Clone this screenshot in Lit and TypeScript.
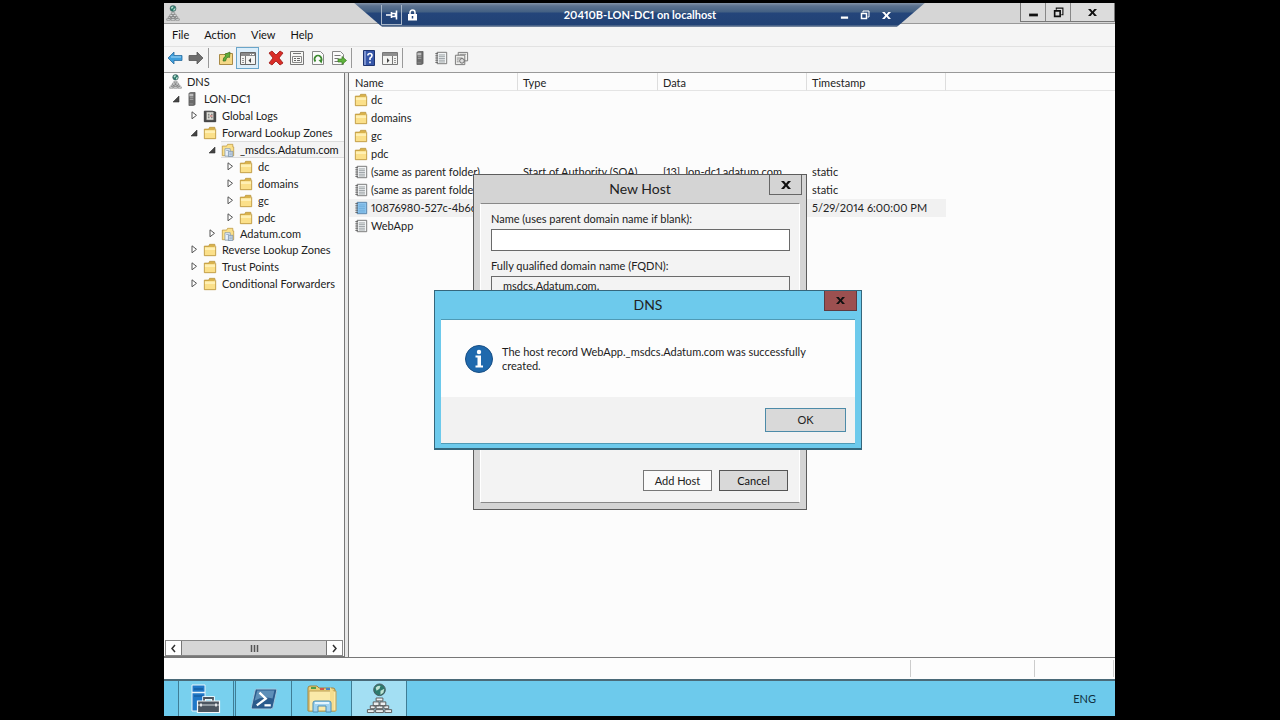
import { LitElement, html, css, svg, nothing, TemplateResult } from "lit";
import { customElement, state } from "lit/decorators.js";
import { classMap } from "lit/directives/class-map.js";

const icon = (body: unknown, w = 16, h = w, vb = `0 0 ${w} ${h}`) =>
  html`<svg width=${w} height=${h} viewBox=${vb} aria-hidden="true">${body}</svg>`;

const folder = () => icon(svg`
  <path d="M1.500 3.500h5l1-2h6v3h1v10h-13z" fill="#d9b24c"/>
  <path d="M2 5h12v9H2z" fill="#fbe08a"/>
  <path d="M2 5h12v3H2z" fill="#fff0b4"/>
  <path d="M1.500 14.500h13v-11h-1v-2h-6l-1 2h-5z" fill="none" stroke="#b8923a" stroke-width=".8"/>`, 14, 14, "0 0 16 16");

const zone = () => icon(svg`
  <path d="M1.500 3.500h5l1-2h6v3h1v10h-13z" fill="#fbe08a" stroke="#b8923a" stroke-width=".8"/>
  <path d="M4.500 6.500h6v8.500h-6z" fill="#eaf2fa" stroke="#7890aa" stroke-width=".8"/>
  <path d="M8.500 9.500h5v6h-5z" fill="#d4e4f4" stroke="#6f87a2" stroke-width=".8"/>
  <path d="M9.500 11.500h3M9.500 13.500h3M6 8.500h3" stroke="#7890aa" stroke-width=".8"/>`, 14, 14, "0 0 16 16");

const logs = () => icon(svg`
  <path d="M1.500 2.500h9l4 1v11h-13z" fill="#4a4a4a" stroke="#333"/>
  <path d="M4 3.500h8v9H4z" fill="#e8e8e0" stroke="#777" stroke-width=".6"/>
  <path d="M5.500 6h2M5.500 8h2M5.500 10h2M9 6h2M9 10h2" stroke="#555"/>
  <path d="M8 8h3" stroke="#a33"/>`, 14, 14, "0 0 16 16");

const server = () => icon(svg`
  <path d="M4.500 1.500l2-1h5v14l-2 1h-5z" fill="#6c6c6c" stroke="#555" stroke-width=".8"/>
  <path d="M5 2h4.500v3H5z" fill="#bdbdbd"/><path d="M5.500 6.500h4M5.500 8.500h4" stroke="#a8a8a8"/>
  <path d="M5 13.500h4" stroke="#8d8d8d"/>`, 14, 14, "0 0 16 16");

const record = (sel = false) => icon(svg`
  <path d="M3.500 1.500h11v13h-11z" fill=${sel ? "#8cc4ee" : "#f2f4f5"} stroke=${sel ? "#4f7da3" : "#6d6d6d"}/>
  <path d="M5.500 4.500h7M5.500 6.500h7M5.500 8.500h7M5.500 10.500h7M5.500 12.500h7" stroke=${sel ? "#6aa9d8" : "#858c90"} stroke-width=".9"/>
  <path d="M1.500 3h3M1.500 5.500h3M1.500 8h3M1.500 10.500h3M1.500 13h3" stroke="#555"/>`, 14, 14, "0 0 16 16");

const dns = (size: number) => icon(svg`
  <circle cx="16" cy="7" r="6" fill="#2d7a6d" stroke="#47585c"/>
  <path d="M12 5q2-3 5-2l-1 3-3 2zM17 8l4-2-1 4-3 2z" fill="#bfe3d4"/>
  <g fill="#eceff0" stroke="#5a5a5a">
    <path d="M12.500 15.500h7v3h-7zM9.500 19.500h6v4h-6zM16.500 19.500h6v4h-6zM6.500 23.500h5v3h-5zM12.500 23.500h7v3h-7zM20.500 23.500h5v3h-5zM3.500 27.500h7v3h-7zM12 27.500h8v3h-8zM21.500 27.500h7v3h-7z"/>
  </g>`, size, size, "0 0 32 32");

const windowIcon = () => icon(svg`
  <path d="M.5 2.500h15v12H.5z" fill="#f4f4f2" stroke="#666"/>
  <path d="M1 3h14v3H1z" fill="#8a8a8a"/><path d="M10 4.500h1M12 4.500h2" stroke="#fff"/>
  <path d="M5.500 6v8" stroke="#777"/><path d="M2 8.500h2M2 10.500h2M2 12.500h2" stroke="#999"/>
  <path d="M11 8v5L8.500 10.500z" fill="#444"/>`);

const tools: Record<string, () => TemplateResult> = {
  Back: () => icon(svg`<path d="M1 8l6-6v3.500h8v5H7V14z" fill="#3f9fdc" stroke="#2a6c9e" stroke-width=".8"/><path d="M4 7h10" stroke="#a6d8f5"/>`),
  Forward: () => icon(svg`<path d="M15 8L9 2v3.500H1v5h8V14z" fill="#6e6e6e" stroke="#555" stroke-width=".8"/>`),
  "Up one level": () => icon(svg`<path d="M1.500 4.500h5l1-1h7v11h-13z" fill="#f4d887" stroke="#a98a45"/><path d="M5 11q0-4 3-5L6.500 4.500 12 2l-.5 5.500L10 7q-2 1-2.500 4z" fill="#5fae3a" stroke="#38701f" stroke-width=".7"/>`),
  "Console tree": windowIcon,
  Delete: () => icon(svg`<path d="M1 3l3-2 4 4 4-4 3 2-4 5 4 5-3 2-4-4-4 4-3-2 4-5z" fill="#d92d27" stroke="#9c1713" stroke-width=".8"/>`),
  Properties: () => icon(svg`<path d="M1.500 1.500h13v13h-13z" fill="#f7f7f5" stroke="#777"/><path d="M4 3.500h8" stroke="#777"/><path d="M3.500 6.500h9v6h-9z" fill="none" stroke="#888"/><path d="M5 8.500h2M8 8.500h3M5 10.500h2M8 10.500h3" stroke="#666"/>`),
  Refresh: () => icon(svg`<path d="M2.500 1.500h8l3 3v10h-11z" fill="#fafafa" stroke="#888"/><path d="M5.500 11.500a3.500 3.500 0 1 1 5 0" fill="none" stroke="#3c8a2e" stroke-width="1.800"/><path d="M8.500 10l4-.5-1 4z" fill="#3c8a2e"/>`),
  "Export list": () => icon(svg`<path d="M1.500 1.500h8l3 3v10h-11z" fill="#fafafa" stroke="#888"/><path d="M3.500 5.500h6M3.500 8.500h4M3.500 11.500h4" stroke="#777"/><path d="M7 9h4V6.500l4.500 4L11 14.500V12H7z" fill="#5eb43c" stroke="#38771f" stroke-width=".7"/>`),
  Help: () => icon(svg`<path d="M2.500.5h11v15h-11z" fill="#3656a8" stroke="#1f3470"/><path d="M3 1h2v14H3z" fill="#7c93cf"/><path d="M6.800 5.500q.2-2 2.200-2t2 2q0 1.200-2 2.700V10M9 11.500v1.800" fill="none" stroke="#fff" stroke-width="1.600"/>`),
  "Action pane": () => icon(svg`<path d="M.5 2.500h15v12H.5z" fill="#f4f4f2" stroke="#777"/><path d="M1 3h14v3H1z" fill="#8f8f8f"/><path d="M10.500 6v8" stroke="#777"/><path d="M12 8.500h2M12 10.500h2M12 12.500h2" stroke="#999"/><path d="M5 8v5l2.500-2.500z" fill="#444"/>`),
  "New server": server,
  "New record": () => record(),
  "New zone": () => icon(svg`<path d="M4.500 1.500h10v9h-10z" fill="#f4f4f2" stroke="#777"/><path d="M1.500 4.500h10v10h-10z" fill="#ededeb" stroke="#777"/><path d="M3 7.500h6M3 9.500h2M3 11.500h2" stroke="#888"/><circle cx="8.500" cy="10.500" r="2.500" fill="#ddd" stroke="#666"/><path d="M6 3.500h7" stroke="#888"/>`, 15, 15, "0 0 16 16"),
};

interface Node { label: string; icon: () => TemplateResult; open?: boolean; selected?: boolean; root?: boolean; children?: Node[] }

const tree: Node = {
  label: "DNS", icon: () => dns(15), root: true, children: [
    { label: "LON-DC1", icon: server, open: true, children: [
      { label: "Global Logs", icon: logs },
      { label: "Forward Lookup Zones", icon: folder, open: true, children: [
        { label: "_msdcs.Adatum.com", icon: zone, open: true, selected: true, children: [
          { label: "dc", icon: folder }, { label: "domains", icon: folder },
          { label: "gc", icon: folder }, { label: "pdc", icon: folder },
        ] },
        { label: "Adatum.com", icon: zone },
      ] },
      { label: "Reverse Lookup Zones", icon: folder },
      { label: "Trust Points", icon: folder },
      { label: "Conditional Forwarders", icon: folder },
    ] },
  ],
};

const rows = [
  { name: "dc", folder: true }, { name: "domains", folder: true },
  { name: "gc", folder: true }, { name: "pdc", folder: true },
  { name: "(same as parent folder)", type: "Start of Authority (SOA)", data: "[13], lon-dc1.adatum.com", time: "static" },
  { name: "(same as parent folder)", time: "static" },
  { name: "10876980-527c-4b6c-", time: "5/29/2014 6:00:00 PM", selected: true },
  { name: "WebApp" },
] as { name: string; folder?: boolean; type?: string; data?: string; time?: string; selected?: boolean }[];

const cross = (s = 10) => icon(svg`<path d="M0 1h3l2 2.500L7 1h3L6.500 5 10 9H7L5 6.500 3 9H0l3.500-4z" fill="currentColor"/>`, s, s, "0 0 10 10");
const dash = (s = 10) => icon(svg`<path d="M1 6h8v2.500H1z" fill="currentColor"/>`, s, s, "0 0 10 10");
const restore = (s = 10) => icon(svg`<path d="M3 2.500V1h6v6H7.500" fill="none" stroke="currentColor"/><path d="M1.500 3.500h5v5h-5z" fill="none" stroke="currentColor" stroke-width="1.500"/>`, s, s, "0 0 10 10");

@customElement("app-root")
export class AppRoot extends LitElement {
  @state() private hostName = "";

  static styles = css`
    :host { display: flex; box-sizing: border-box; min-height: 100vh; padding: 3px 165px 4px 164px; background: #000;
      font: 11px/14px Lato, "Open Sans", sans-serif; font-variant-numeric: proportional-nums; color: #222; }
    *, *::before { box-sizing: border-box; }
    button, input { font: inherit; color: inherit; margin: 0; padding: 0; border: 0; background: none; border-radius: 0; }
    h1, h2, ul, p { margin: 0; padding: 0; font-weight: 400; list-style: none; }
    svg { display: block; flex: none; }
    .desktop { position: relative; flex: 1; min-width: 0; display: flex; flex-direction: column; background: #f5f5f5; }

    .titlebar { display: flex; justify-content: space-between; height: 21px; background: #d6d6d6; border-bottom: 1px solid #999; }
    .appicon { padding: 2px 0 0 1px; }
    .controls { display: flex; height: 19px; border: 1px solid #777; border-top: 0; background: #dcdcdc; color: #111; }
    .controls button { width: 25px; display: grid; place-items: center; border-right: 1px solid #888; }
    .controls button:last-child { width: 43px; border: 0; }

    .conn { position: absolute; top: 0; left: 20%; right: 20%; height: 24px; display: flex; align-items: center;
      padding: 0 28px 0 27px; color: #fff; background: linear-gradient(#8393a8 0, #5b7290 3px, #436083 9px, #24457a 10px, #214275 22px, #71839c 23px);
      clip-path: polygon(0 0, 100% 0, calc(100% - 28px) 100%, 28px 100%); }
    .conn h1 { flex: 1; padding-left: 23px; text-align: center; font-size: 11px; font-weight: 700; }
    .conn button { width: 21px; height: 20px; display: grid; place-items: center; color: #fff; }
    .conn .pin { border: 1px solid #a8b6c8; border-top: 0; }

    .menu { display: flex; gap: 15px; padding: 0 8px; height: 22px; align-items: center; }
    .menu button { color: #111; }
    .toolbar { display: flex; align-items: center; height: 27px; padding-bottom: 3px; border-top: 1px solid #e2e2e2; border-bottom: 1px solid #999; }
    .toolbar button { width: 21px; height: 22px; display: grid; place-items: center; }
    .toolbar .pressed { width: 23px; margin-right: 6px; border: 1px solid #6aa5c9; background: #dceefa; }
    .sep { width: 9px; height: 20px; padding-left: 2px; }
    .sep::before { content: ""; display: block; width: 1px; height: 20px; background: #999; }

    .panes { flex: 1; min-height: 0; display: flex; gap: 3px; border-bottom: 1px solid #777; background: #e8e8e8; }
    .tree { width: 181px; display: flex; flex-direction: column; overflow: hidden; background: #fcfcfc; border-right: 1px solid #777; border-bottom: 1px solid #777; }
    .nodes { flex: 1; overflow: hidden; }
    .nodes ul ul ul { margin-bottom: -1px; }
    .row { height: 17px; display: flex; align-items: center; white-space: nowrap; }
    .root { padding-left: 4px; gap: 4px; }
    .twist { width: 18px; height: 17px; flex: none; display: grid; place-items: center; }
    .kids { padding-left: 3px; }
    .kids .kids { padding-left: 18px; }
    .label { display: flex; align-items: center; gap: 5px; flex: 1; height: 17px; }
    .label.sel { background: #f4f4f4; border-top: 1px solid #ddd; border-bottom: 1px solid #ddd; color: #111; }
    .scroll { display: flex; height: 16px; margin: 0 1px; background: #fff; border: 1px solid #888; }
    .scroll button { width: 15px; display: grid; place-items: center; }
    .thumb { flex: 1; display: grid; place-items: center; background: #d6d6d6; border: solid #777; border-width: 0 1px; }

    .list { flex: 1; min-width: 0; background: #fcfcfc; border-left: 1px solid #777; overflow: hidden; }
    table { width: 100%; table-layout: fixed; border-collapse: separate; border-spacing: 0; }
    th { height: 18px; padding: 2px 5px 0; text-align: left; font-weight: 400; border-right: 1px solid #ddd; border-bottom: 1px solid #e4e4e4; }
    th:first-child { padding-left: 6px; }
    th:last-child { border-right: 0; }
    td { height: 18px; padding: 0 5px; white-space: nowrap; overflow: hidden; }
    .c1 { width: 169px; } .c2 { width: 140px; } .c3 { width: 149px; } .c4 { width: 139px; }
    .name { display: flex; align-items: center; gap: 3px; }
    .picked td:not(:last-child) { background: #f1f1f1; }

    .status { display: flex; justify-content: flex-end; height: 23px; padding: 2px 1px; background: #fdfdfd; border-bottom: 2px solid #4a6a78; }
    .status span { width: 124px; border-left: 1px solid #ccc; }
    .status span:last-child { width: 80px; border-right: 1px solid #ccc; }
    .taskbar { display: flex; height: 35px; padding: 0 19px 0 14px; background: #6dcaec; }
    .taskbar button { width: 56px; display: grid; place-items: center; border-left: 1px solid #3f7d95; background: #78d0ee; }
    .taskbar .server { margin-right: 1px; border-right: 1px solid #3f7d95; }
    .taskbar .explorer { width: 60px; }
    .taskbar .active { background: #a3dff3; border-right: 1px solid #3f7d95; }
    .lang { margin-left: auto; align-self: center; color: #10303e; }

    .dialog { position: absolute; display: flex; flex-direction: column; }
    .dialog h2 { height: 28px; line-height: 28px; font-size: 14px; text-align: center; color: #222; }
    .dialog .close { position: absolute; top: 0; right: 4px; width: 33px; height: 20px; display: grid; place-items: center; border: 1px solid #666; border-top: 0; color: #111; }
    .newhost { left: 309px; top: 171px; width: 334px; height: 336px; padding: 0 6px 6px; background: #d4d4d4; border: 1px solid #5c5c5c; }
    .newhost .body { flex: 1; display: flex; flex-direction: column; padding: 8px 9px 11px 10px; background: #f3f3f3; border: 1px solid #888; border-left-color: #fff; border-right-color: #fff; }
    .body label { line-height: 14px; margin-bottom: 3px; }
    .body input { height: 22px; margin-bottom: 8px; padding: 0 6px; border: 1px solid #6a6a6a; background: #fff; outline: 0; }
    .body input[readonly] { height: 18px; background: #f3f3f3; }
    .buttons { display: flex; justify-content: flex-end; gap: 7px; margin-top: auto; padding-right: 2px; }
    .buttons button { width: 69px; height: 21px; border: 1px solid #777; background: #fafafa; }
    .buttons .grey { background: #d9d9d9; border-color: #555; color: #111; }
    .message { left: 270px; top: 287px; width: 428px; height: 160px; padding: 0 6px 4px; background: #6dcaec; border: 1px solid #35677c; border-bottom-width: 2px; }
    .message .close { background: #9c5050; border-color: #5e3a40; }
    .inner { flex: 1; display: flex; flex-direction: column; border: 1px solid #4f9ab5; border-left: 0; border-right: 0; background: #fdfdfd; }
    .text { flex: 1; display: flex; align-items: center; gap: 9px; padding: 0 24px; color: #1c1c1c; }
    .text p { max-width: 325px; }
    .foot { height: 46px; display: flex; justify-content: flex-end; align-items: center; padding: 0 9px; background: #f2f2f2; }
    .foot button { width: 81px; height: 24px; border: 1px solid #4d8ba8; background: #d9d9d9; }
  `;

  private node(n: Node): TemplateResult {
    return html`<li role="treeitem">
      <div class=${classMap({ row: true, root: !!n.root })}>
        ${n.root ? html`${n.icon()}<span>${n.label}</span>` : html`
          <span class="twist">${n.open
            ? icon(svg`<path d="M7 1v6H1z" fill="#444" stroke="#333" stroke-width=".6"/>`, 8)
            : icon(svg`<path d="M2 .8v7L6.500 4.300z" fill="#fff" stroke="#555"/>`, 8, 9)}</span>
          <span class=${classMap({ label: true, sel: !!n.selected })}>${n.icon()}<span>${n.label}</span></span>`}
      </div>
      ${n.children ? html`<ul class="kids" role="group">${n.children.map(c => this.node(c))}</ul>` : nothing}
    </li>`;
  }

  private toolbar() {
    const groups = [["Back", "Forward"], ["Up one level", "Console tree", "Delete", "Properties", "Refresh", "Export list"], ["Help", "Action pane"], ["New server", "New record", "New zone"]];
    return html`<div class="toolbar" role="toolbar">${groups.map((g, i) => html`
      ${i ? html`<span class="sep"></span>` : nothing}
      ${g.map(t => html`<button class=${classMap({ pressed: t === "Console tree" })} aria-label=${t}>${tools[t]()}</button>`)}`)}</div>`;
  }

  render() {
    return html`<div class="desktop">
      <header class="titlebar">
        <span class="appicon">${dns(16)}</span>
        <div class="controls">
          <button aria-label="Minimize">${dash(11)}</button>
          <button aria-label="Restore">${restore(11)}</button>
          <button aria-label="Close">${cross(9)}</button>
        </div>
      </header>
      <div class="conn">
        <button class="pin" aria-label="Pin">${icon(svg`<path d="M0 6h5M5.500 3v6M5.500 4.500h4v3h-4M10.500 1.500v9" fill="none" stroke="#fff" stroke-width="1.600"/>`, 12)}</button>
        <button aria-label="Security">${icon(svg`<path d="M3 5V3.500a2.500 2.500 0 0 1 5 0V5" fill="none" stroke="#fff" stroke-width="1.500"/><path d="M1 5h9v6.500H1z" fill="#fff"/><path d="M5.500 7v2.500" stroke="#24457a" stroke-width="1.500"/>`, 11, 12)}</button>
        <h1>20410B-LON-DC1 on localhost</h1>
        <button aria-label="Minimize session">${dash(9)}</button>
        <button aria-label="Restore session">${restore(10)}</button>
        <button aria-label="Close session">${cross(9)}</button>
      </div>
      <nav class="menu">${["File", "Action", "View", "Help"].map(m => html`<button>${m}</button>`)}</nav>
      ${this.toolbar()}
      <main class="panes">
        <section class="tree">
          <div class="nodes"><ul role="tree">${this.node(tree)}</ul></div>
          <div class="scroll">
            <button aria-label="Scroll left">${icon(svg`<path d="M6 1L3 4.500 6 8" fill="none" stroke="#333" stroke-width="1.500"/>`, 9)}</button>
            <div class="thumb">${icon(svg`<path d="M1.500 0v7M4.500 0v7M7.500 0v7" stroke="#555" stroke-width="1.500"/>`, 9, 7)}</div>
            <button aria-label="Scroll right">${icon(svg`<path d="M3 1l3 3.500L3 8" fill="none" stroke="#333" stroke-width="1.500"/>`, 9)}</button>
          </div>
        </section>
        <section class="list">
          <table>
            <thead><tr><th class="c1">Name</th><th class="c2">Type</th><th class="c3">Data</th><th class="c4">Timestamp</th><th></th></tr></thead>
            <tbody>${rows.map(r => html`<tr class=${classMap({ picked: !!r.selected })}>
              <td><span class="name">${r.folder ? folder() : record(r.selected)}${r.name}</span></td>
              <td>${r.type}</td><td>${r.data}</td><td>${r.time}</td><td></td></tr>`)}</tbody>
          </table>
        </section>
      </main>
      <div class="status"><span></span><span></span></div>
      <footer class="taskbar">
        <button class="server" aria-label="Server Manager">${icon(svg`
          <path d="M1 1h13v26H1z" fill="#1f78c8" stroke="#e8f4fb"/><path d="M1 8.500h13" stroke="#e8f4fb" stroke-width="1.500"/><path d="M3 5h9M3 12h9" stroke="#1765ad" stroke-width="2"/>
          <path d="M13 17v-3h9v3" fill="none" stroke="#fff" stroke-width="3.500"/><path d="M13 17v-3h9v3" fill="none" stroke="#4d5660" stroke-width="1.800"/>
          <path d="M6.500 17h22v11.500h-22z" fill="#4d5660" stroke="#f4f8fa" stroke-width="1.200"/><path d="M7 21h21" stroke="#d8dde0"/><path d="M10 19.500v3M25 19.500v3" stroke="#fff" stroke-width="1.500"/>`, 30)}</button>
        <button aria-label="PowerShell">${icon(svg`
          <path d="M7 4h21q2 0 1.500 2l-4 18q-.5 2-2.500 2H3q-2 0-1.500-2l4-18Q6 4 7 4z" fill="#2b5b8c" stroke="#a9c9de"/>
          <path d="M8 5.500h19l-2 9Q14 11 5 17z" fill="#5e8fb8"/>
          <path d="M10.500 8l7 6.500L7.500 22" fill="none" stroke="#fff" stroke-width="2.500"/><path d="M16 22h7" stroke="#fff" stroke-width="2.500"/>`, 28, 28, "0 0 31 30")}</button>
        <button class="explorer" aria-label="File Explorer">${icon(svg`
          <path d="M2 4q0-2 2-2h7l2 2h14q2 0 2 2v21H2z" fill="#e9cf7c" stroke="#9f8540"/>
          <path d="M5 3h5v2H5z" fill="#4e9e4a"/><path d="M14 4h4v2h-4z" fill="#d2564a"/><path d="M20 4h5v2h-5z" fill="#4b84c4"/>
          <path d="M3 7h27v20H3z" fill="#fae9a8" stroke="#bd9f55"/><path d="M24 3l4 5v18h-4z" fill="#f5dd8e"/>
          <path d="M7 28v-9q0-2 2-2h14q2 0 2 2v9h-5v-6h-8v6z" fill="#9fd2ef" stroke="#4b8db3"/><path d="M9 19h14" stroke="#e4f5fd" stroke-width="2"/>`, 31, 30)}</button>
        <button class="active" aria-label="DNS Manager">${dns(31)}</button>
        <span class="lang">ENG</span>
      </footer>

      <form class="dialog newhost" @submit=${(e: Event) => e.preventDefault()}>
        <h2>New Host</h2>
        <button type="button" class="close" aria-label="Close">${cross()}</button>
        <div class="body">
          <label for="host">Name (uses parent domain name if blank):</label>
          <input id="host" .value=${this.hostName} @input=${(e: Event) => (this.hostName = (e.target as HTMLInputElement).value)}>
          <label for="fqdn">Fully qualified domain name (FQDN):</label>
          <input id="fqdn" readonly .value=${`${this.hostName}_msdcs.Adatum.com.`}>
          <div class="buttons"><button>Add Host</button><button type="button" class="grey">Cancel</button></div>
        </div>
      </form>

      <div class="dialog message" role="alertdialog" aria-label="DNS">
        <h2>DNS</h2>
        <button class="close" aria-label="Close">${cross(9)}</button>
        <div class="inner">
          <div class="text">
            ${icon(svg`<circle cx="14" cy="14" r="13.500" fill="#1f69ad" stroke="#184f85"/><circle cx="14" cy="7" r="2.200" fill="#fff"/><path d="M10.500 10.500h5.500v10h2v2h-7.500v-2h2v-8h-2z" fill="#fff"/>`, 28)}
            <p>The host record WebApp._msdcs.Adatum.com was successfully created.</p>
          </div>
          <div class="foot"><button>OK</button></div>
        </div>
      </div>
    </div>`;
  }
}
